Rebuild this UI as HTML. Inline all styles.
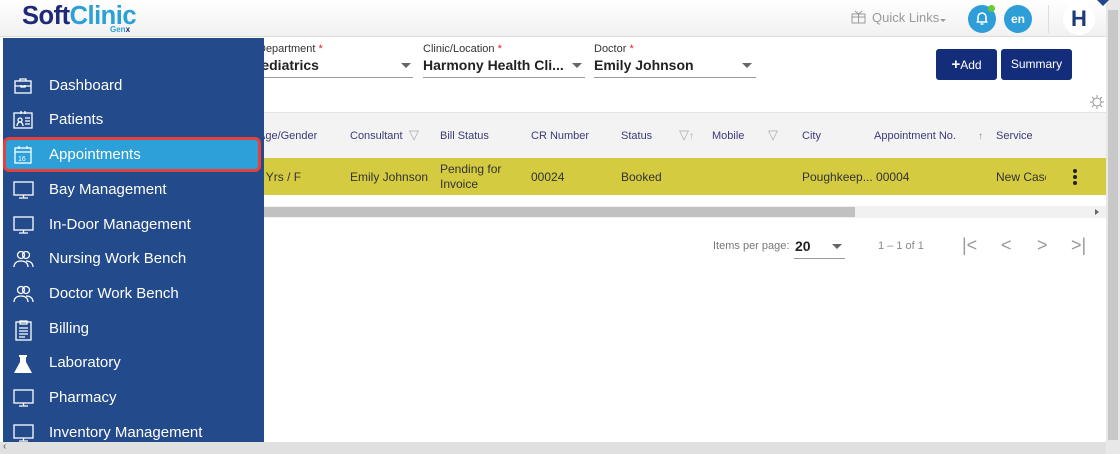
<!DOCTYPE html>
<html><head><style>
*{margin:0;padding:0;box-sizing:border-box}
body{width:1120px;height:454px;overflow:hidden;background:#fff;font-family:"Liberation Sans",sans-serif;position:relative}
.a{position:absolute;white-space:nowrap}
.hdr{left:0;top:0;width:1106px;height:37px;background:linear-gradient(#fff,#f1f1f1);border-bottom:1px solid #ddd}
.side{left:3px;top:38px;width:261px;height:404px;background:#234a8a}
.mi{left:0;width:261px;height:34px;color:#fff;font-size:15px}
.mi span{position:absolute;left:46px;top:8px}
.mi svg{position:absolute;left:10px;top:7px}
.lbl{font-size:11px;color:#333}
.lbl b{color:#d22;font-weight:normal}
.val{font-size:14px;font-weight:bold;color:#222}
.ul{height:1px;background:#999}
.th{font-size:11px;color:#3a3a7a}
.td{font-size:12px;color:#333}
.btn{background:#132d7a;color:#fff;font-size:12px;border-radius:3px;text-align:center;line-height:31px;height:31px;top:49px}
.caret{width:0;height:0;border-left:5px solid transparent;border-right:5px solid transparent;border-top:5px solid #666}
</style></head><body>
<div class="a hdr"></div>
<div class="a" style="left:22px;top:2px;font-size:25.5px;font-weight:bold;color:#1e2a78;letter-spacing:-0.5px">Soft<span style="color:#2aa0d8">Clinic</span></div>
<div class="a" style="left:110px;top:25px;font-size:8px;color:#2aa0d8;font-weight:bold">Gen<span style="color:#1e2a78">x</span></div>
<svg class="a" style="left:851px;top:10px" width="15" height="14" viewBox="0 0 15 14" fill="none" stroke="#999"><rect x="1" y="4" width="13" height="9"/><path d="M1 7h13M7.5 4v9M4 1l3.5 3L11 1"/></svg>
<div class="a" style="left:872px;top:10px;font-size:13px;color:#999">Quick Links</div>
<div class="a caret" style="left:940px;top:19px;border-width:3px 3px 0;border-top-color:#999"></div>
<div class="a" style="left:968px;top:5px;width:28px;height:28px;border-radius:50%;background:#2d9ed8"></div>
<svg class="a" style="left:975px;top:11px" width="14" height="15" viewBox="0 0 14 15" fill="none" stroke="#fff" stroke-width="1.6"><path d="M3 11V6a4 4 0 018 0v5h1.5M1.5 11H12M5.5 13h3"/></svg>
<div class="a" style="left:988px;top:5px;width:7px;height:7px;border-radius:50%;background:#6c3"></div>
<div class="a" style="left:1004px;top:5px;width:28px;height:28px;border-radius:50%;background:#2d9ed8;color:#fff;font-size:12px;font-weight:bold;text-align:center;line-height:28px">en</div>
<div class="a" style="left:1048px;top:5px;width:1px;height:28px;background:#ddd"></div>
<div class="a" style="left:1063px;top:3px;width:32px;height:32px;border-radius:50%;background:#fff;color:#1e3a78;font-size:22px;font-weight:bold;text-align:center;line-height:32px">H</div>
<div class="a" style="left:1106px;top:0;width:14px;height:454px;background:#e8e8e8"></div>
<div class="a" style="left:1108px;top:10px;width:10px;height:430px;background:#c8c8c8"></div>
<div class="a" style="left:1097px;top:0;border-left:6px solid transparent;border-right:6px solid transparent;border-top:6px solid #1e4a8a"></div>
<div class="a" style="left:0;top:442px;width:1106px;height:12px;background:#e0e0e0"></div>
<div class="a" style="left:3px;top:441px;font-size:10px;color:#555">‹</div>

<div class="a lbl" style="left:258px;top:43px">Department <b>*</b></div>
<div class="a val" style="left:252px;top:57px">Pediatrics</div>
<div class="a caret" style="left:401px;top:63px"></div>
<div class="a ul" style="left:252px;top:77px;width:161px"></div>
<div class="a lbl" style="left:423px;top:43px">Clinic/Location <b>*</b></div>
<div class="a val" style="left:423px;top:57px">Harmony Health Cli...</div>
<div class="a caret" style="left:572px;top:63px"></div>
<div class="a ul" style="left:423px;top:77px;width:162px"></div>
<div class="a lbl" style="left:594px;top:43px">Doctor <b>*</b></div>
<div class="a val" style="left:594px;top:57px">Emily Johnson</div>
<div class="a caret" style="left:742px;top:63px"></div>
<div class="a ul" style="left:594px;top:77px;width:162px"></div>
<div class="a btn" style="left:936px;width:61px"><b style="font-size:15px">+</b>Add</div>
<div class="a btn" style="left:1001px;width:71px">Summary</div>
<svg class="a" style="left:1090px;top:95px" width="14" height="14" viewBox="0 0 14 14" fill="none" stroke="#999"><circle cx="7" cy="7" r="4"/><path d="M7 0v3M7 11v3M0 7h3M11 7h3M2 2l2 2M10 10l2 2M12 2l-2 2M4 10l-2 2"/></svg>
<div class="a" style="left:264px;top:112px;width:842px;height:1px;background:#e4e4e4"></div>

<div class="a" style="left:264px;top:113px;width:842px;height:45px;background:#f3f3f3"></div>
<div class="a th" style="left:258px;top:130px">Age/Gender</div>
<div class="a th" style="left:350px;top:130px">Consultant</div>
<div class="a th" style="left:409px;top:127px;color:#aaa;font-size:13px">▽</div>
<div class="a th" style="left:440px;top:130px">Bill Status</div>
<div class="a th" style="left:531px;top:130px">CR Number</div>
<div class="a th" style="left:621px;top:130px">Status</div>
<div class="a th" style="left:679px;top:127px;color:#aaa;font-size:13px">▽<span style="font-size:10px">↑</span></div>
<div class="a th" style="left:712px;top:130px">Mobile</div>
<div class="a th" style="left:768px;top:127px;color:#aaa;font-size:13px">▽</div>
<div class="a th" style="left:802px;top:130px">City</div>
<div class="a th" style="left:874px;top:130px">Appointment No.</div>
<div class="a th" style="left:978px;top:131px;color:#888;font-size:10px">↑</div>
<div class="a th" style="left:996px;top:130px">Service</div>
<div class="a" style="left:264px;top:158px;width:842px;height:37px;background:#d4cb41"></div>
<div class="a td" style="left:256px;top:170px">5 Yrs / F</div>
<div class="a td" style="left:350px;top:170px">Emily Johnson</div>
<div class="a td" style="left:440px;top:162px;line-height:15px">Pending for<br>Invoice</div>
<div class="a td" style="left:531px;top:170px">00024</div>
<div class="a td" style="left:621px;top:170px">Booked</div>
<div class="a td" style="left:802px;top:170px">Poughkeep... 00004</div>
<div class="a td" style="left:996px;top:170px;width:50px;overflow:hidden">New Case</div>
<div class="a" style="left:1073px;top:169px;width:4px;height:4px;border-radius:50%;background:#222;box-shadow:0 6px 0 #222,0 12px 0 #222"></div>
<div class="a" style="left:264px;top:206px;width:842px;height:12px;background:#f1f1f1"></div>
<div class="a" style="left:264px;top:207px;width:591px;height:10px;background:#c1c1c1"></div>
<div class="a" style="left:1095px;top:209px;border-top:3px solid transparent;border-bottom:3px solid transparent;border-left:4px solid #666"></div>

<div class="a" style="left:713px;top:240px;font-size:11px;color:#777">Items per page:</div>
<div class="a" style="left:795px;top:238px;font-size:14px;font-weight:bold;color:#222">20</div>
<div class="a caret" style="left:832px;top:244px"></div>
<div class="a ul" style="left:794px;top:258px;width:51px;background:#999"></div>
<div class="a" style="left:878px;top:240px;font-size:11px;color:#888">1 – 1 of 1</div>
<div class="a" style="left:962px;top:235px;font-size:18px;color:#999">|&lt;</div>
<div class="a" style="left:1001px;top:235px;font-size:18px;color:#999">&lt;</div>
<div class="a" style="left:1037px;top:235px;font-size:18px;color:#999">&gt;</div>
<div class="a" style="left:1071px;top:235px;font-size:18px;color:#999">&gt;|</div>

<div class="a side">
<div class="a mi" style="top:31px"><svg width="20" height="20" viewBox="0 0 20 20" fill="none" stroke="#fff" stroke-width="1.3"><rect x="2" y="5" width="16" height="12"/><path d="M7 5V3h6v2M2 10h16M8 9v2h4V9"/></svg><span>Dashboard</span></div>
<div class="a mi" style="top:65px"><svg width="20" height="20" viewBox="0 0 20 20" fill="none" stroke="#fff" stroke-width="1.3"><rect x="1" y="3" width="18" height="15"/><path d="M8 1v3M12 1v3M4 16c0-3 2-4 3-4s3 1 3 4M7 12a2 2 0 100-4 2 2 0 000 4M12 8h5M12 11h5M12 14h5"/></svg><span>Patients</span></div>
<div class="a" style="left:0;top:99px;width:258px;height:35px;border:3px solid #e5413c;border-radius:6px;background:#2d9fd9"></div>
<div class="a mi" style="top:100px"><svg width="20" height="20" viewBox="0 0 20 20" fill="none" stroke="#fff" stroke-width="1.3"><rect x="2" y="3" width="16" height="15"/><path d="M2 7h16M6 1v3M14 1v3"/><text x="5" y="16" font-size="7" fill="#fff" stroke="none" font-family="Liberation Sans">16</text></svg><span>Appointments</span></div>
<div class="a mi" style="top:135px"><svg width="22" height="20" viewBox="0 0 22 20" fill="none" stroke="#fff" stroke-width="1.3"><rect x="1" y="2" width="19" height="13"/><path d="M10.5 15v3M6 18h9"/></svg><span>Bay Management</span></div>
<div class="a mi" style="top:170px"><svg width="22" height="20" viewBox="0 0 22 20" fill="none" stroke="#fff" stroke-width="1.3"><rect x="1" y="2" width="19" height="13"/><path d="M10.5 15v3M6 18h9"/></svg><span>In-Door Management</span></div>
<div class="a mi" style="top:204px"><svg width="22" height="20" viewBox="0 0 22 20" fill="none" stroke="#fff" stroke-width="1.3"><circle cx="8" cy="6" r="3.5"/><circle cx="13" cy="6" r="3.5"/><path d="M1 18c0-4 3-6 7-6s7 2 7 6M13 12c4 0 7 2 7 6"/></svg><span>Nursing Work Bench</span></div>
<div class="a mi" style="top:239px"><svg width="22" height="20" viewBox="0 0 22 20" fill="none" stroke="#fff" stroke-width="1.3"><circle cx="8" cy="6" r="3.5"/><circle cx="13" cy="6" r="3.5"/><path d="M1 18c0-4 3-6 7-6s7 2 7 6M13 12c4 0 7 2 7 6"/></svg><span>Doctor Work Bench</span></div>
<div class="a mi" style="top:274px"><svg width="20" height="22" viewBox="0 0 20 22" fill="none" stroke="#fff" stroke-width="1.3"><rect x="3" y="3" width="15" height="18"/><path d="M7 2h7v3H7zM6 9h9M6 12h9M6 15h9M6 18h6"/></svg><span>Billing</span></div>
<div class="a mi" style="top:308px"><svg width="20" height="22" viewBox="0 0 20 22"><path d="M6 2h8v2h-1v5l6 11H1l6-11V4H6z" fill="#fff"/></svg><span>Laboratory</span></div>
<div class="a mi" style="top:343px"><svg width="22" height="20" viewBox="0 0 22 20" fill="none" stroke="#fff" stroke-width="1.3"><rect x="1" y="2" width="19" height="13"/><path d="M10.5 15v3M6 18h9"/></svg><span>Pharmacy</span></div>
<div class="a mi" style="top:378px"><svg width="22" height="20" viewBox="0 0 22 20" fill="none" stroke="#fff" stroke-width="1.3"><rect x="1" y="2" width="19" height="13"/><path d="M10.5 15v3M6 18h9"/></svg><span>Inventory Management</span></div>
</div>
</body></html>
